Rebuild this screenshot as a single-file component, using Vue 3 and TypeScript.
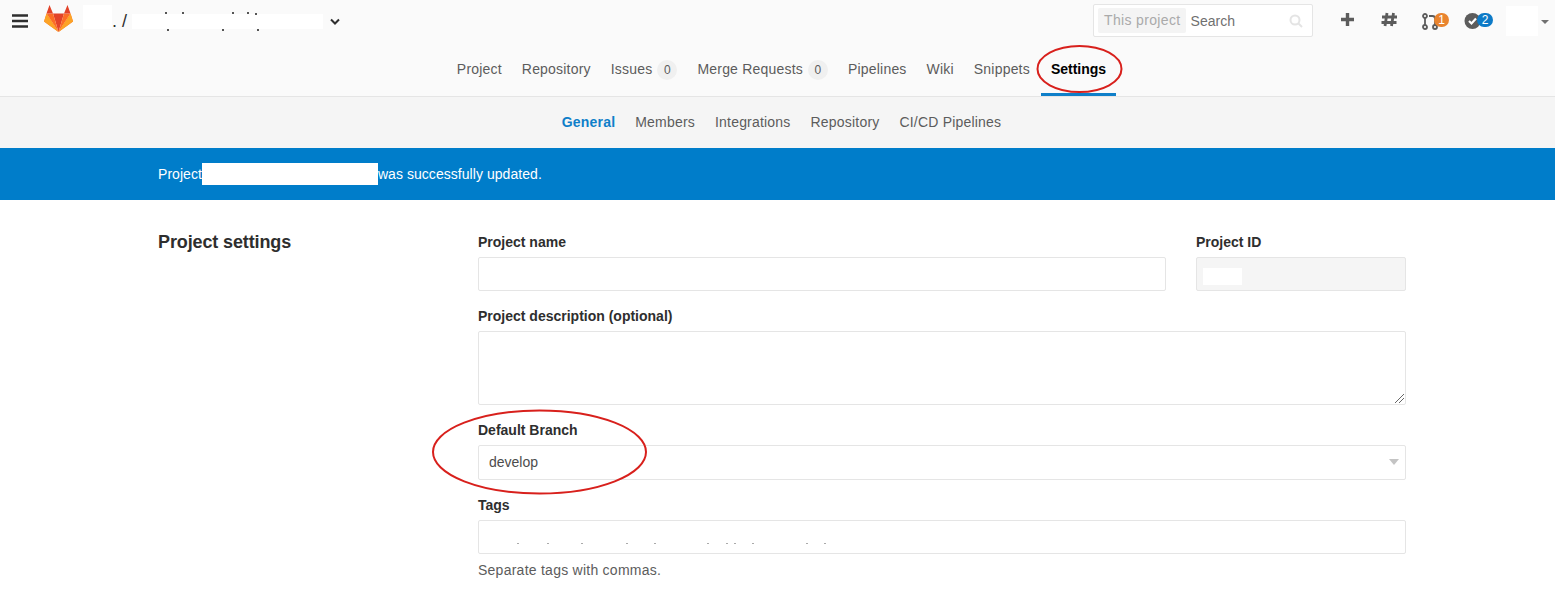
<script setup lang="ts">
const tabs = [
  { label: 'Project' },
  { label: 'Repository' },
  { label: 'Issues', count: 0 },
  { label: 'Merge Requests', count: 0 },
  { label: 'Pipelines' },
  { label: 'Wiki' },
  { label: 'Snippets' },
  { label: 'Settings', active: true },
]
const subTabs = [
  { label: 'General', active: true },
  { label: 'Members' },
  { label: 'Integrations' },
  { label: 'Repository' },
  { label: 'CI/CD Pipelines' },
]
const tagSpecks = [38, 68, 102, 147, 175, 228, 247, 255, 273, 327, 345]
const crumbSpecks = [
  { x: 165, y: 12 }, { x: 182, y: 12 }, { x: 232, y: 12 }, { x: 247, y: 12 }, { x: 255, y: 13 },
  { x: 167, y: 29 }, { x: 222, y: 29 }, { x: 257, y: 29 },
]
</script>

<template>
  <div class="page">
    <header class="top">
      <div class="left">
        <svg class="burger" width="16" height="14" viewBox="0 0 16 14"><path d="M0 1.500h16M0 7h16M0 12.500h16" stroke="#2e2e2e" stroke-width="2.400" /></svg>
        <svg class="logo" width="29" height="27" viewBox="0 0 29 27">
          <path d="M14.500 27 0 16.500 2.500 8.500z" fill="#fc6d26" />
          <path d="M14.500 27 29 16.500 26.500 8.500z" fill="#fc6d26" />
          <path d="M14.500 27 9 8.500h11z" fill="#e24329" />
          <path d="M14.500 27 2.500 8.500H9z" fill="#fc6d26" />
          <path d="M14.500 27 26.500 8.500H20z" fill="#fc6d26" />
          <path d="M0 16.500 2.500 8.500 14.500 27z" fill="#fca326" />
          <path d="M29 16.500 26.500 8.500 14.500 27z" fill="#fca326" />
          <path d="M2.500 8.500 5.500 0 9 8.500z" fill="#e24329" />
          <path d="M26.500 8.500 23.500 0 20 8.500z" fill="#e24329" />
        </svg>
        <span class="mask group"></span>
        <span class="crumb">.&nbsp;/</span>
        <span class="mask repo"></span>
        <svg class="chev" width="10" height="7" viewBox="0 0 10 7"><path d="M1 1.500 5 5.500 9 1.500" fill="none" stroke="#2e2e2e" stroke-width="2" /></svg>
      </div>
      <div class="right">
        <div class="search">
          <span class="scope">This project</span>
          <span class="placeholder">Search</span>
          <svg class="glass" width="14" height="14" viewBox="0 0 14 14"><circle cx="6" cy="6" r="4.500" fill="none" stroke="#e4e4e4" stroke-width="2" /><path d="M9.500 9.500 13 13" stroke="#e4e4e4" stroke-width="2" /></svg>
        </div>
        <svg class="ico plus" width="15" height="15" viewBox="0 0 15 15"><path d="M7.500 1v13M1 7.500h13" stroke="#5c5c5c" stroke-width="3.400" /></svg>
        <svg class="ico hash" width="17" height="15" viewBox="0 0 17 15"><path d="M6 1 4 14M12.500 1l-2 13M1 5h15M.5 10.500h15" stroke="#5c5c5c" stroke-width="2.800" fill="none" /></svg>
        <span class="stat mr">
          <svg width="16" height="17" viewBox="0 0 16 17"><g fill="none" stroke="#5c5c5c" stroke-width="1.800"><circle cx="3" cy="3" r="2" /><circle cx="3" cy="14" r="2" /><circle cx="13" cy="14" r="2" /><path d="M3 5v7M13 12V5.500C13 4 12 3 10.500 3H7" /></g></svg>
          <b class="pill orange">1</b>
        </span>
        <span class="stat todo">
          <svg width="17" height="16" viewBox="0 0 16 16"><circle cx="8" cy="8" r="8" fill="#5c5c5c" /><path d="M4.500 8 7 10.500 11.500 5.500" fill="none" stroke="#fff" stroke-width="2.200" /></svg>
          <b class="pill blue">2</b>
        </span>
        <span class="mask avatar"></span>
        <svg class="caret" width="8" height="4" viewBox="0 0 8 4"><path d="M0 0h8L4 4z" fill="#707070" /></svg>
      </div>
      <i v-for="s in crumbSpecks" :key="s.x" class="speck" :style="{ left: s.x + 'px', top: s.y + 'px' }"></i>
    </header>

    <nav class="tabs">
      <a v-for="t in tabs" :key="t.label" class="tab" :class="{ on: t.active }">
        {{ t.label }}<span v-if="t.count !== undefined" class="count">{{ t.count }}</span>
      </a>
    </nav>

    <nav class="subtabs">
      <a v-for="t in subTabs" :key="t.label" class="sub" :class="{ on: t.active }">{{ t.label }}</a>
    </nav>

    <div class="flash">
      <span>Project</span><span class="mask flash-mask"></span><span>was successfully updated.</span>
    </div>

    <main class="content">
      <h4 class="title">Project settings</h4>
      <form class="form" @submit.prevent>
        <div class="row">
          <div class="field grow">
            <label>Project name</label>
            <div class="input"></div>
          </div>
          <div class="field idf">
            <label>Project ID</label>
            <div class="input disabled"><span class="mask idmask"></span></div>
          </div>
        </div>
        <div class="field">
          <label>Project description (optional)</label>
          <div class="input area">
            <svg class="grip" width="9" height="9" viewBox="0 0 9 9"><path d="M0 9 9 0M4 9l5-5" stroke="#666" stroke-width="1" /></svg>
          </div>
        </div>
        <div class="field">
          <label>Default Branch</label>
          <div class="input select">develop<svg width="10" height="6" viewBox="0 0 10 6"><path d="M0 0h10L5 6z" fill="#c4c4c4" /></svg></div>
        </div>
        <div class="field">
          <label>Tags</label>
          <div class="input">
            <i v-for="x in tagSpecks" :key="x" class="speck faint" :style="{ left: x + 'px' }"></i>
          </div>
          <p class="help">Separate tags with commas.</p>
        </div>
      </form>
    </main>

    <svg class="ring" width="1555" height="596" viewBox="0 0 1555 596">
      <ellipse cx="1079.500" cy="69" rx="42" ry="23" fill="none" stroke="#d8201c" stroke-width="2" />
      <ellipse cx="539.500" cy="452" rx="106.500" ry="41.500" fill="none" stroke="#d8201c" stroke-width="2" />
    </svg>
  </div>
</template>

<style>
html, body { margin: 0; background: #fff; }
</style>

<style scoped>
.page {
  position: relative;
  width: 1555px;
  height: 596px;
  overflow: hidden;
  font-family: "Liberation Sans", Arial, sans-serif;
  font-size: 14px;
  color: #2e2e2e;
}
.mask { display: inline-block; background: #fff; }
.speck { position: absolute; width: 2px; height: 2px; background: #555; }
.speck.faint { top: 22px; height: 1px; background: #aaa; }
.top {
  height: 42px;
  background: #fafafa;
  display: flex;
  justify-content: space-between;
}
.left { display: flex; align-items: flex-start; }
.burger { margin: 14px 0 0 12px; }
.logo { margin: 5px 0 0 16px; }
.group { width: 29px; height: 24px; margin: 5px 0 0 10px; }
.crumb { margin: 11px 0 0 0; font-size: 18px; line-height: 20px; color: #2e2e2e; width: 20px; }
.repo { width: 191px; height: 15px; margin: 14px 0 0 0; }
.chev { margin: 18px 0 0 7px; }
.right { display: flex; align-items: flex-start; padding-right: 6px; }
.search {
  width: 214px;
  height: 31px;
  margin: 4px 0 0 0;
  background: #fff;
  border: 1px solid #e5e5e5;
  border-radius: 2px;
  display: flex;
  align-items: center;
  padding-left: 4px;
}
.scope {
  background: #f4f4f4;
  color: #aaa;
  padding: 0 5px 0 6px;
  line-height: 25px;
  border-radius: 2px;
  letter-spacing: .35px;
}
.placeholder { color: #707070; margin-left: 5px; }
.glass { margin-left: auto; margin-right: 9px; }
.ico { margin-top: 12px; }
.plus { margin-left: 27px; }
.hash { margin-left: 26px; }
.stat { display: flex; margin-top: 11px; height: 18px; }
.mr { margin-left: 24px; }
.todo { margin-left: 15px; }
.stat svg { margin-top: 1.500px; }
.pill {
  width: 15px;
  height: 14px;
  line-height: 14px;
  border-radius: 8px;
  text-align: center;
  color: #fff;
  font-size: 12px;
  font-weight: 400;
  margin: 2px 0 0 -4px;
}
.orange { background: #e9842e; }
.blue { background: #0d7ac7; width: 16px; }
.avatar { width: 32px; height: 30px; margin: 6px 0 0 13px; }
.caret { margin: 20px 0 0 3px; }
.tabs {
  height: 55px;
  box-sizing: border-box;
  background: #fafafa;
  border-bottom: 1px solid #e5e5e5;
  display: flex;
  justify-content: center;
  gap: 20px;
  padding-left: 18px;
}
.tab {
  color: #5c5c5c;
  height: 54px;
  box-sizing: border-box;
  padding-top: 18px;
  line-height: 18px;
  letter-spacing: .2px;
}
.count {
  display: inline-block;
  background: #f0f0f0;
  color: #5c5c5c;
  font-size: 12px;
  line-height: 20px;
  width: 20px;
  margin-left: 5px;
  text-align: center;
  border-radius: 10px;
}
.tab.on {
  color: #000;
  font-weight: 700;
  border-bottom: 3px solid #0f7fc9;
  padding-left: 10px;
  padding-right: 10px;
  margin-left: -9px;
  letter-spacing: 0;
}
.subtabs {
  height: 51px;
  background: #f5f5f5;
  display: flex;
  justify-content: center;
  gap: 20px;
  align-items: center;
  padding: 0 0 2px 8px;
  box-sizing: border-box;
}
.sub { color: #5c5c5c; letter-spacing: .2px; }
.sub.on { color: #0f7fc9; font-weight: 700; }
.flash {
  height: 52px;
  background: #007dca;
  color: #fff;
  display: flex;
  align-items: center;
  padding-left: 158px;
  letter-spacing: .05px;
}
.flash-mask { width: 176px; height: 22px; margin-left: 0; }
.content {
  display: grid;
  grid-template-columns: 320px 928px;
  padding: 32px 0 0 158px;
}
.title { margin: 0; font-size: 18px; line-height: 20px; font-weight: 700; color: #2e2e2e; letter-spacing: -.12px; }
.form { display: flex; flex-direction: column; }
.row { display: flex; gap: 30px; }
.grow { flex: 1; }
.idf { width: 210px; }
.field { margin-bottom: 15px; }
label {
  display: block;
  height: 25px;
  line-height: 20px;
  font-weight: 700;
  color: #2e2e2e;
}
.input {
  position: relative;
  height: 34px;
  box-sizing: border-box;
  background: #fff;
  border: 1px solid #e5e5e5;
  border-radius: 2px;
}
.disabled { background: #f5f5f5; }
.idmask { position: absolute; left: 6px; top: 10px; width: 39px; height: 17px; }
.area { height: 74px; }
.grip { position: absolute; right: 1px; bottom: 1px; }
.select {
  height: 35px;
  display: flex;
  align-items: center;
  justify-content: space-between;
  padding: 0 6px 2px 10px;
  color: #4c4c4c;
}
.help { margin: 8px 0 0; color: #5c5c5c; line-height: 16px; letter-spacing: .25px; }
.ring { position: absolute; left: 0; top: 0; pointer-events: none; }
</style>
